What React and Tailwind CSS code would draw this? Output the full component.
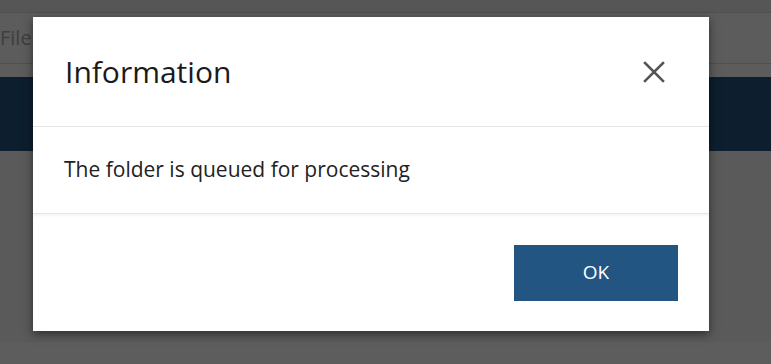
import React from "react";

function CloseIcon() {
  return (
    <svg width="22" height="22" viewBox="0 0 22 22" fill="none" stroke="#555555" strokeWidth="2.6" strokeLinecap="square">
      <path d="M2 2 L20 20" />
      <path d="M20 2 L2 20" />
    </svg>
  );
}

export default function App() {
  return (
    <div className="relative h-[364px] w-[771px] overflow-hidden bg-[#5b5b5b]" style={{ fontFamily: "'Open Sans', 'Liberation Sans', sans-serif" }}>
      {/* page behind the overlay */}
      <div className="h-[13px] border-b border-[#4f4f4f] bg-[#565656]" />
      <div className="flex h-[51px] items-center border-b border-[#4f4f4f] bg-[#5c5c5c] text-[20px] text-[#3f3f3f]">
        <span>File</span>
      </div>
      <div className="h-[13px] bg-[#5c5c5c]" />
      <div className="h-[74px] bg-[#0d1e2e]" />
      <div className="h-[191px] bg-[#5a5a5a]" />
      <div className="h-[21px] bg-[#5d5d5d]" />

      {/* dialog */}
      <div className="absolute left-[33px] top-[17px] flex w-[676px] flex-col bg-white shadow-[0_3px_9px_rgba(0,0,0,0.5)]">
        <div className="flex h-[110px] items-center justify-between border-b border-[#e5e5e5] pl-[32px] pr-[44px]">
          <h2 className="text-[30px] font-normal text-[#1a1a1a]">Information</h2>
          <button className="flex items-center justify-center">
            <CloseIcon />
          </button>
        </div>
        <div className="flex h-[86px] items-center px-[31px] text-[21px] text-[#222222]">
          The folder is queued for processing
        </div>
        <div className="flex h-[118px] items-center justify-end border-t border-[#e5e5e5] pr-[31px] shadow-[inset_0_2px_3px_rgba(0,0,0,0.04)]">
          <button className="flex h-[56px] w-[164px] items-center justify-center bg-[#235583] text-[19px] text-white">
            OK
          </button>
        </div>
      </div>
    </div>
  );
}
